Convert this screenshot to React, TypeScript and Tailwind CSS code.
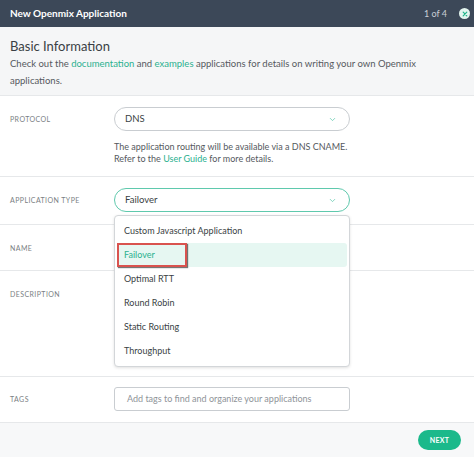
import { ChevronDown } from 'lucide-react';

const font = { fontFamily: 'Lato, "Open Sans", Arial, sans-serif' };

function Label({ children }: { children: React.ReactNode }) {
  return (
    <div className="w-[114px] shrink-0 pl-[10px] h-[24px] flex items-center text-[7px] tracking-[0.06em] uppercase text-[#7b7f84]">
      {children}
    </div>
  );
}

function Select({ value, active }: { value: string; active?: boolean }) {
  return (
    <div
      className={
        'w-[236px] h-[24px] rounded-full border flex items-center justify-between pl-[10px] pr-[12px] bg-white ' +
        (active ? 'border-[#5fc9ad]' : 'border-[#c9cdd1]')
      }
    >
      <span className="text-[9.5px] text-[#3a3f44]">{value}</span>
      <ChevronDown className="w-[9px] h-[9px] text-[#5fc9ad]" strokeWidth={2} />
    </div>
  );
}

const options = [
  'Custom Javascript Application',
  'Failover',
  'Optimal RTT',
  'Round Robin',
  'Static Routing',
  'Throughput',
];

export default function App() {
  return (
    <div className="relative w-[474px] h-[457px] overflow-hidden bg-white" style={font}>
      {/* header */}
      <div className="h-[27px] bg-[#3c4858] flex items-center justify-between pl-[10px] pr-[4px]">
        <span className="text-[10px] font-bold text-white">New Openmix Application</span>
        <div className="flex items-center gap-[12px]">
          <span className="text-[9px] text-[#c9cfd6]">1 of 4</span>
          <div className="w-[11px] h-[11px] rounded-full bg-[#e3f5ef] flex items-center justify-center">
            <svg viewBox="0 0 10 10" className="w-[6px] h-[6px]">
              <path d="M2 2 L8 8 M8 2 L2 8" stroke="#1fb58a" strokeWidth="2" strokeLinecap="round" />
            </svg>
          </div>
        </div>
      </div>

      {/* intro */}
      <div className="h-[69px] bg-[#f5f6f7] border-b border-[#e6e8ea] px-[10px] pt-[10px]">
        <h1 className="text-[13px] leading-[18px] text-[#3a3f44]">Basic Information</h1>
        <p className="text-[9.5px] leading-[17px] text-[#55595e]">
          Check out the <span className="text-[#2bb18f]">documentation</span> and{' '}
          <span className="text-[#2bb18f]">examples</span> applications for details on writing your own Openmix
          applications.
        </p>
      </div>

      {/* protocol */}
      <div className="h-[81px] flex pt-[11px] border-b border-[#e6e8ea]">
        <Label>Protocol</Label>
        <div>
          <Select value="DNS" />
          <p className="mt-[10px] text-[9px] leading-[12px] text-[#55595e]">
            The application routing will be available via a DNS CNAME.
            <br />
            Refer to the <span className="text-[#2bb18f]">User Guide</span> for more details.
          </p>
        </div>
      </div>

      {/* application type */}
      <div className="h-[48px] flex pt-[11px] border-b border-[#e6e8ea]">
        <Label>Application Type</Label>
        <Select value="Failover" active />
      </div>

      {/* name */}
      <div className="h-[46px] flex pt-[11px] border-b border-[#e6e8ea]">
        <Label>Name</Label>
      </div>

      {/* description */}
      <div className="h-[106px] flex pt-[11px] border-b border-[#e6e8ea]">
        <Label>Description</Label>
      </div>

      {/* tags */}
      <div className="h-[46px] flex pt-[10px] border-b border-[#e6e8ea]">
        <Label>Tags</Label>
        <div className="w-[236px] h-[24px] rounded-[3px] border border-[#c9cdd1] flex items-center pl-[12px]">
          <span className="text-[9px] text-[#8f9499]">Add tags to find and organize your applications</span>
        </div>
      </div>

      {/* footer */}
      <div className="h-[34px] bg-[#f7f8f9] flex items-center justify-end pr-[13px]">
        <button className="w-[43px] h-[20px] rounded-full bg-[#1bb98b] text-white text-[7px] font-bold tracking-[0.05em]">
          NEXT
        </button>
      </div>

      {/* dropdown menu */}
      <div className="absolute left-[114px] top-[215px] w-[236px] h-[152px] bg-white border border-[#d3d6d9] rounded-[4px] shadow-[0_1px_3px_rgba(0,0,0,0.12)] pt-[3px] px-[2px]">
        {options.map((o) => (
          <div
            key={o}
            className={
              'relative h-[24px] flex items-center pl-[7px] text-[9px] rounded-[3px] ' +
              (o === 'Failover' ? 'bg-[#e6f7f2] text-[#2bb18f]' : 'text-[#3a3f44]')
            }
          >
            {o}
            {o === 'Failover' && (
              <div className="absolute left-0 top-0 w-[70px] h-[24px] border-2 border-[#d9534f] shadow-[1px_1px_1px_rgba(60,60,60,0.7)]" />
            )}
          </div>
        ))}
      </div>
    </div>
  );
}
